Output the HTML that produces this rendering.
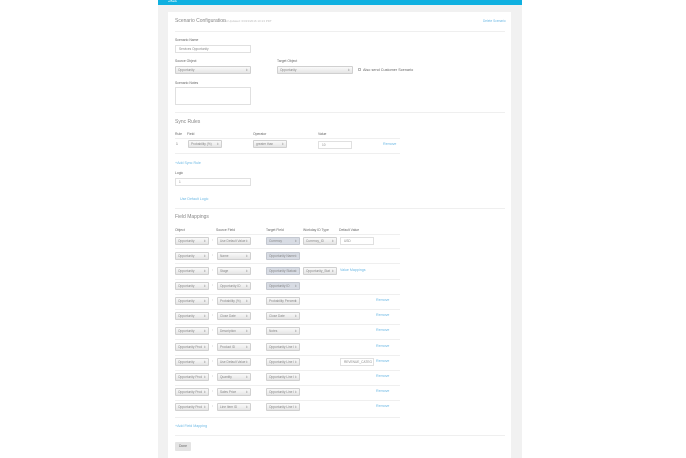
<!DOCTYPE html><html><head><style>
*{margin:0;padding:0;box-sizing:border-box}
body{width:686px;height:458px;background:#fff;position:relative;overflow:hidden;font-family:"Liberation Sans",sans-serif;font-size:3.6px;color:#777}
.a{position:absolute;white-space:nowrap}
.s{position:absolute;height:8px;border:1px solid #d0d0d0;border-radius:1px;background:linear-gradient(#fafafa,#e4e4e4);font-size:3.2px;line-height:6px;padding-left:2px;color:#888}
.s:after{content:"⇕";position:absolute;right:2px;top:0;font-size:3px}
.b{background:#d8dce4;border-color:#c4c8d0}
.i{position:absolute;height:8px;border:1px solid #e0e0e0;background:#fff;font-size:3.2px;line-height:6px;padding-left:3px;color:#888}
.l{position:absolute;height:1px;background:#efefef}
.lk{color:#6bb8e4}
.h{font-size:3.4px;color:#666}
.t{font-size:5px;color:#888}
</style></head><body>
<div class="a" style="left:158px;top:0;width:364px;height:458px;background:#f1f1f1"></div>
<div class="a" style="left:158px;top:0;width:364px;height:5px;background:#0fb0e0"></div>
<div class="a" style="left:168px;top:0;color:#fff;font-size:3px;line-height:3px">◂ Back</div>
<div class="a" style="left:168px;top:12px;width:343px;height:446px;background:#fff"></div>
<div class="a t" style="left:175px;top:18px">Scenario Configuration</div>
<div class="a" style="left:222px;top:19px;font-size:3px;color:#bbb">Last Updated: 03/23/2016 10:13 PDT</div>
<div class="a lk" style="left:483px;top:19px;font-size:3.2px">Delete Scenario</div>
<div class="l" style="left:175px;top:31px;width:330px"></div>
<div class="a h" style="left:175px;top:38px">Scenario Name</div>
<div class="i" style="left:175px;top:45px;width:76px">Services Opportunity</div>
<div class="a h" style="left:175px;top:59px">Source Object</div>
<div class="s" style="left:175px;top:66px;width:76px">Opportunity</div>
<div class="a h" style="left:277px;top:59px">Target Object</div>
<div class="s" style="left:277px;top:66px;width:76px">Opportunity</div>
<div class="a" style="left:358px;top:68px;width:3px;height:3px;border:0.5px solid #bbb"></div>
<div class="a h" style="left:363px;top:68px;font-size:3.8px">Also send Customer Scenario</div>
<div class="a h" style="left:175px;top:81px">Scenario Notes</div>
<div class="a" style="left:175px;top:87px;width:76px;height:18px;border:1px solid #e0e0e0"></div>
<div class="l" style="left:175px;top:112px;width:330px"></div>
<div class="a t" style="left:175px;top:119px">Sync Rules</div>
<div class="a h" style="left:175px;top:132px">Rule</div><div class="a h" style="left:187px;top:132px">Field</div><div class="a h" style="left:253px;top:132px">Operator</div><div class="a h" style="left:318px;top:132px">Value</div>
<div class="l" style="left:175px;top:138px;width:225px"></div>
<div class="a h" style="left:176px;top:142px">1</div>
<div class="s" style="left:188px;top:140px;width:34px">Probability (%)</div>
<div class="s" style="left:253px;top:140px;width:34px">greater than</div>
<div class="i" style="left:318px;top:141px;width:34px">10</div>
<div class="a lk" style="left:383px;top:142px">Remove</div>
<div class="l" style="left:175px;top:153px;width:225px"></div>
<div class="a lk" style="left:175px;top:161px">+Add Sync Rule</div>
<div class="a h" style="left:175px;top:171px">Logic</div>
<div class="i" style="left:175px;top:178px;width:76px">1</div>
<div class="a lk" style="left:180px;top:197px">Use Default Logic</div>
<div class="l" style="left:175px;top:208px;width:330px"></div>
<div class="a t" style="left:175px;top:214px">Field Mappings</div>
<div class="a h" style="left:175px;top:228px">Object</div><div class="a h" style="left:216px;top:228px">Source Field</div><div class="a h" style="left:266px;top:228px">Target Field</div><div class="a h" style="left:303px;top:228px">Workday ID Type</div><div class="a h" style="left:339px;top:228px">Default Value</div>
<div class="l" style="left:175px;top:234px;width:225px"></div>

<div class="s" style="left:175px;top:237px;width:34px">Opportunity</div><div class="a" style="left:212px;top:238px">:</div><div class="s" style="left:217px;top:237px;width:34px">Use Default Value</div><div class="s b" style="left:266px;top:237px;width:34px">Currency</div><div class="s" style="left:303px;top:237px;width:34px">Currency_ID</div><div class="i" style="left:340px;top:237px;width:34px">USD</div><div class="l" style="left:175px;top:248px;width:225px"></div>

<div class="s" style="left:175px;top:252px;width:34px">Opportunity</div><div class="a" style="left:212px;top:253px">:</div><div class="s" style="left:217px;top:252px;width:34px">Name</div><div class="s b" style="left:266px;top:252px;width:34px">Opportunity Name</div><div class="l" style="left:175px;top:263px;width:225px"></div>

<div class="s" style="left:175px;top:267px;width:34px">Opportunity</div><div class="a" style="left:212px;top:268px">:</div><div class="s" style="left:217px;top:267px;width:34px">Stage</div><div class="s b" style="left:266px;top:267px;width:34px">Opportunity Status</div><div class="s" style="left:303px;top:267px;width:34px">Opportunity_Stat</div><div class="a lk" style="left:340px;top:268px">Value Mappings</div><div class="l" style="left:175px;top:279px;width:225px"></div>

<div class="s" style="left:175px;top:282px;width:34px">Opportunity</div><div class="a" style="left:212px;top:283px">:</div><div class="s" style="left:217px;top:282px;width:34px">Opportunity ID</div><div class="s b" style="left:266px;top:282px;width:34px">Opportunity ID</div><div class="l" style="left:175px;top:294px;width:225px"></div>

<div class="s" style="left:175px;top:297px;width:34px">Opportunity</div><div class="a" style="left:212px;top:298px">:</div><div class="s" style="left:217px;top:297px;width:34px">Probability (%)</div><div class="s" style="left:266px;top:297px;width:34px">Probability Percent</div><div class="a lk" style="left:376px;top:298px">Remove</div><div class="l" style="left:175px;top:309px;width:225px"></div>

<div class="s" style="left:175px;top:312px;width:34px">Opportunity</div><div class="a" style="left:212px;top:313px">:</div><div class="s" style="left:217px;top:312px;width:34px">Close Date</div><div class="s" style="left:266px;top:312px;width:34px">Close Date</div><div class="a lk" style="left:376px;top:313px">Remove</div><div class="l" style="left:175px;top:324px;width:225px"></div>

<div class="s" style="left:175px;top:327px;width:34px">Opportunity</div><div class="a" style="left:212px;top:328px">:</div><div class="s" style="left:217px;top:327px;width:34px">Description</div><div class="s" style="left:266px;top:327px;width:34px">Notes</div><div class="a lk" style="left:376px;top:328px">Remove</div><div class="l" style="left:175px;top:339px;width:225px"></div>

<div class="s" style="left:175px;top:343px;width:34px">Opportunity Prod</div><div class="a" style="left:212px;top:344px">:</div><div class="s" style="left:217px;top:343px;width:34px">Product ID</div><div class="s" style="left:266px;top:343px;width:34px">Opportunity Line I</div><div class="a lk" style="left:376px;top:344px">Remove</div><div class="l" style="left:175px;top:355px;width:225px"></div>

<div class="s" style="left:175px;top:358px;width:34px">Opportunity</div><div class="a" style="left:212px;top:359px">:</div><div class="s" style="left:217px;top:358px;width:34px">Use Default Value</div><div class="s" style="left:266px;top:358px;width:34px">Opportunity Line I</div><div class="i" style="left:340px;top:358px;width:34px">REVENUE_CATEG</div><div class="a lk" style="left:376px;top:359px">Remove</div><div class="l" style="left:175px;top:370px;width:225px"></div>

<div class="s" style="left:175px;top:373px;width:34px">Opportunity Prod</div><div class="a" style="left:212px;top:374px">:</div><div class="s" style="left:217px;top:373px;width:34px">Quantity</div><div class="s" style="left:266px;top:373px;width:34px">Opportunity Line I</div><div class="a lk" style="left:376px;top:374px">Remove</div><div class="l" style="left:175px;top:385px;width:225px"></div>

<div class="s" style="left:175px;top:388px;width:34px">Opportunity Prod</div><div class="a" style="left:212px;top:389px">:</div><div class="s" style="left:217px;top:388px;width:34px">Sales Price</div><div class="s" style="left:266px;top:388px;width:34px">Opportunity Line I</div><div class="a lk" style="left:376px;top:389px">Remove</div><div class="l" style="left:175px;top:400px;width:225px"></div>

<div class="s" style="left:175px;top:403px;width:34px">Opportunity Prod</div><div class="a" style="left:212px;top:404px">:</div><div class="s" style="left:217px;top:403px;width:34px">Line Item ID</div><div class="s" style="left:266px;top:403px;width:34px">Opportunity Line I</div><div class="a lk" style="left:376px;top:404px">Remove</div><div class="l" style="left:175px;top:417px;width:225px"></div>

<div class="a lk" style="left:175px;top:424px">+Add Field Mapping</div>
<div class="l" style="left:175px;top:435px;width:330px"></div>
<div class="a" style="left:175px;top:442px;width:16px;height:9px;background:#e4e4e4;border-radius:1px;font-size:3.4px;line-height:9px;text-align:center;color:#666">Done</div>
</body></html>
